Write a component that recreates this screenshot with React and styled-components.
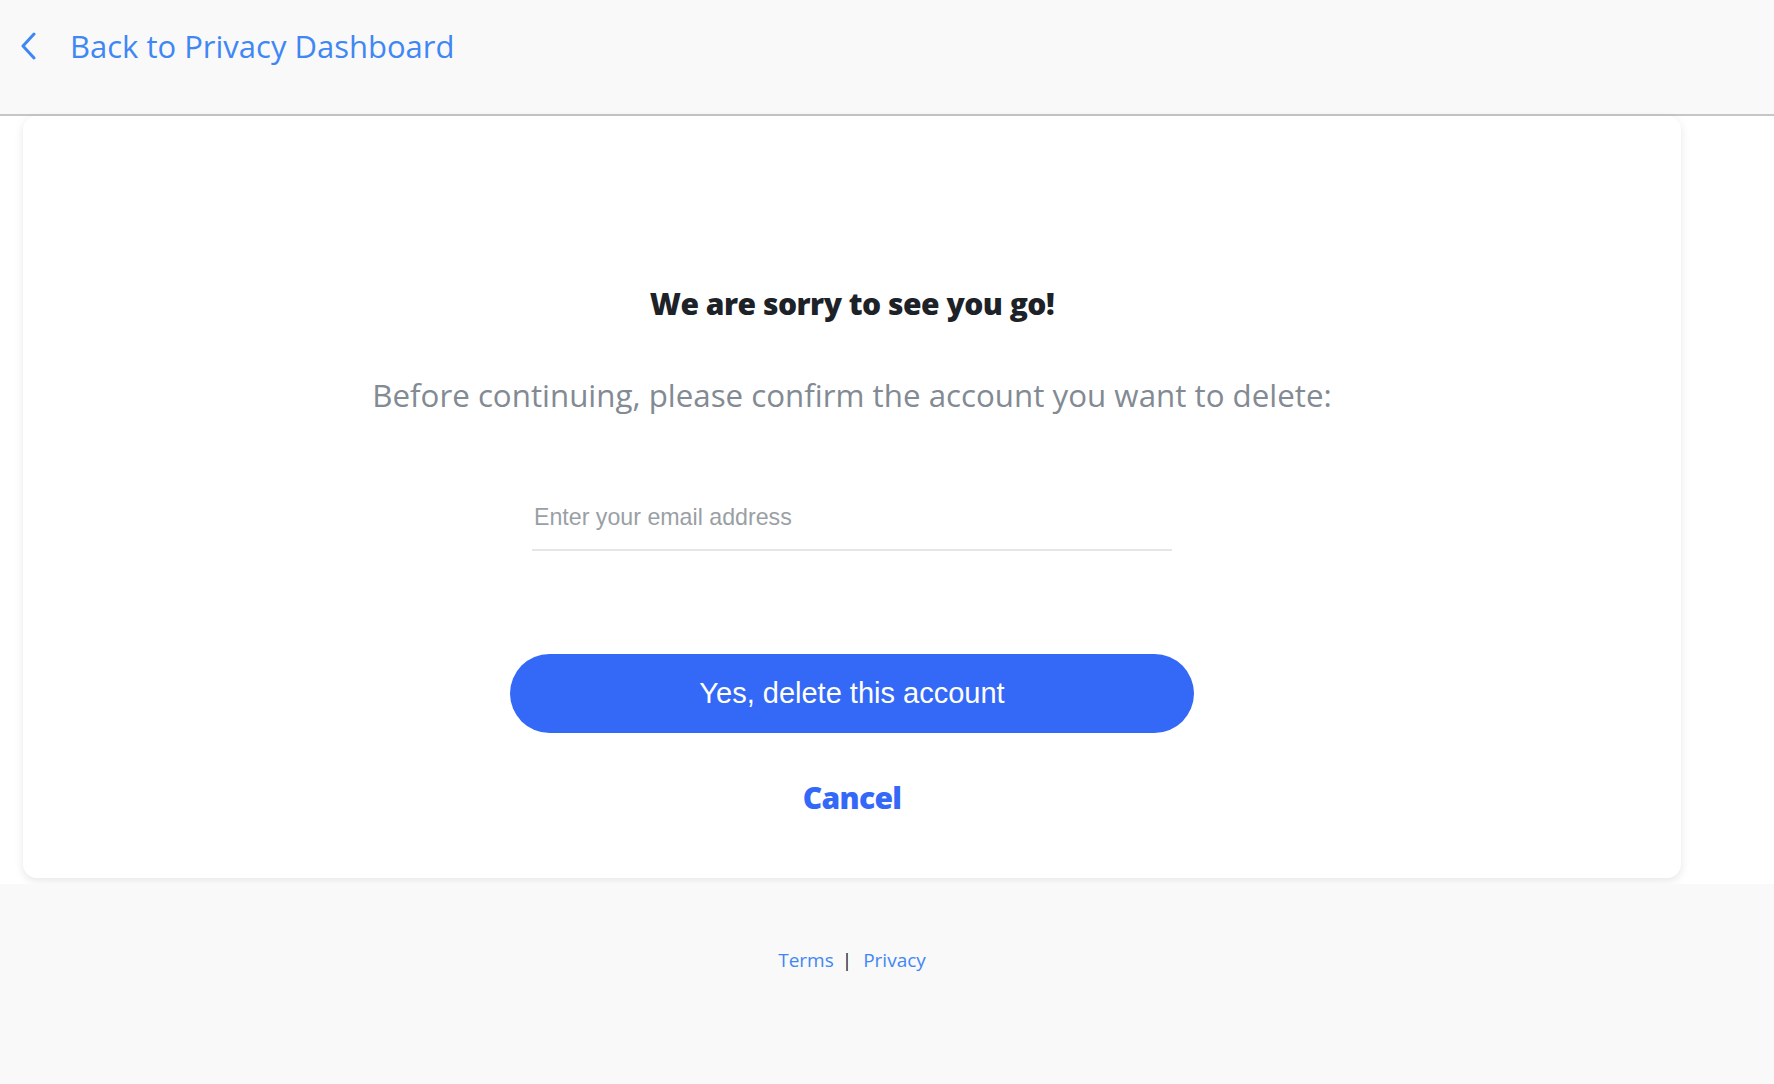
import styled, { createGlobalStyle } from "styled-components";

const GlobalStyle = createGlobalStyle`
  html, body {
    margin: 0;
    padding: 0;
    height: 100%;
    background: #f9f9f9;
  }
  #root {
    min-height: 100%;
    display: flex;
    flex-direction: column;
  }
  * {
    box-sizing: border-box;
  }
`;

const Page = styled.div`
  flex: 1;
  display: flex;
  flex-direction: column;
  min-height: 1084px;
  font-family: "Open Sans", "Noto Sans", sans-serif;
`;

const Header = styled.header`
  height: 116px;
  background: #f9f9f9;
  border-bottom: 2px solid #c6c6c6;
  display: flex;
  align-items: flex-start;
  padding: 25px 0 0 19px;
`;

const BackLink = styled.a`
  display: flex;
  align-items: center;
  gap: 33px;
  color: #3f87f5;
  font-size: 31px;
  line-height: 42px;
  text-decoration: none;
  cursor: pointer;
`;

const Main = styled.main`
  background: #fff;
  padding: 0 0 6px 23px;
`;

const Card = styled.section`
  width: 1658px;
  height: 762px;
  background: #fff;
  border-radius: 14px;
  box-shadow: 0 3px 10px rgba(0, 0, 0, 0.1);
  display: flex;
  flex-direction: column;
  align-items: center;
  padding-top: 171px;
`;

const Title = styled.h1`
  margin: 0;
  font-size: 30px;
  line-height: 34px;
  font-weight: 800;
  color: #1d2228;
  letter-spacing: -0.5px;
`;

const Subtitle = styled.p`
  margin: 56px 0 0;
  font-size: 31.3px;
  line-height: 36px;
  color: #828a93;
`;

const EmailInput = styled.input`
  margin-top: 80px;
  width: 640px;
  height: 58px;
  padding: 0 2px 8px;
  border: none;
  border-bottom: 2px solid #e6e6e6;
  outline: none;
  font-family: "Liberation Sans", Arial, sans-serif;
  font-size: 23.2px;
  color: #1d2228;

  &::placeholder {
    color: #9a9fa5;
  }
`;

const DeleteButton = styled.button`
  margin-top: 103px;
  width: 684px;
  height: 79px;
  border: none;
  border-radius: 40px;
  background: #3469f7;
  color: #fff;
  font-family: "Liberation Sans", Arial, sans-serif;
  font-size: 29px;
  cursor: pointer;
`;

const CancelLink = styled.a`
  margin-top: 47px;
  font-size: 30px;
  line-height: 36px;
  font-weight: 800;
  color: #3469f7;
  letter-spacing: -0.7px;
  cursor: pointer;
`;

const Footer = styled.footer`
  flex: 1;
  width: 1704px;
  background: #f9f9f9;
  display: flex;
  justify-content: center;
  align-items: flex-start;
  padding-top: 63px;
  gap: 8px;
  font-size: 19px;
`;

const FooterLink = styled.a`
  color: #3f87f5;
  text-decoration: none;
  cursor: pointer;
`;

const Divider = styled.span`
  color: #1d2228;
  margin-right: 3px;
`;

const ChevronLeft = () => (
  <svg width="18" height="28" viewBox="0 0 18 28" fill="none">
    <path
      d="M15 2 L4 14 L15 26"
      stroke="#3f87f5"
      strokeWidth="3"
      strokeLinecap="round"
      strokeLinejoin="round"
    />
  </svg>
);

export default function App() {
  return (
    <>
      <GlobalStyle />
      <Page>
        <Header>
          <BackLink>
            <ChevronLeft />
            Back to Privacy Dashboard
          </BackLink>
        </Header>
        <Main>
          <Card>
            <Title>We are sorry to see you go!</Title>
            <Subtitle>
              Before continuing, please confirm the account you want to delete:
            </Subtitle>
            <EmailInput type="email" placeholder="Enter your email address" />
            <DeleteButton>Yes, delete this account</DeleteButton>
            <CancelLink>Cancel</CancelLink>
          </Card>
        </Main>
        <Footer>
          <FooterLink>Terms</FooterLink>
          <Divider>|</Divider>
          <FooterLink>Privacy</FooterLink>
        </Footer>
      </Page>
    </>
  );
}
